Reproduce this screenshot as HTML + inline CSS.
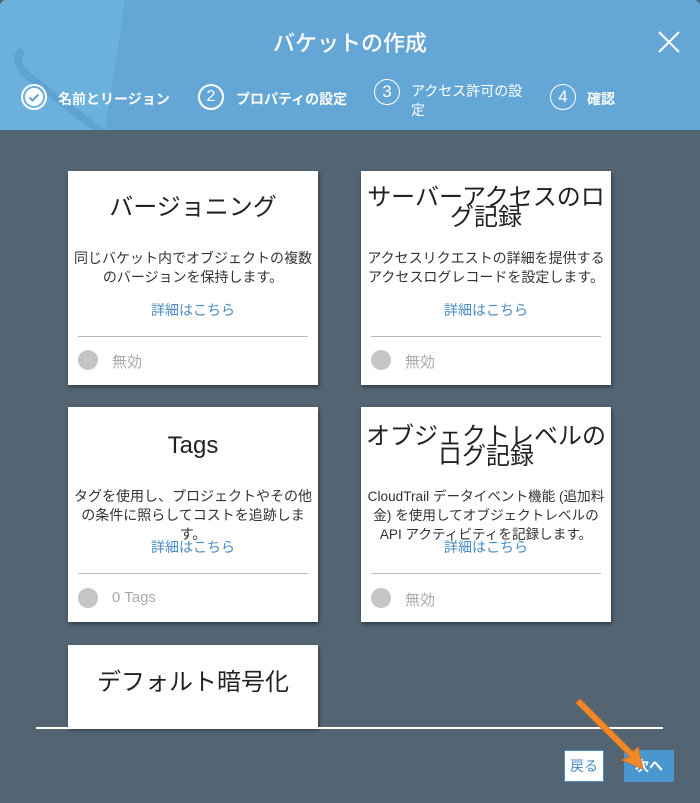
<!DOCTYPE html>
<html><head><meta charset="utf-8">
<style>
*{margin:0;padding:0;box-sizing:border-box}
body{width:700px;height:803px;overflow:hidden;background:#536573;font-family:"Liberation Sans","Noto Sans CJK JP",sans-serif;position:relative}
.hdr{position:absolute;left:0;top:0;width:700px;height:130px;background:#64a7d6;overflow:hidden;border-radius:6px 6px 0 0}
.t{position:absolute;white-space:nowrap}
.card{position:absolute;width:250px;background:#fff;box-shadow:1px 2px 4px rgba(0,0,0,.45);overflow:hidden}
.ttl{position:absolute;left:0;width:100%;text-align:center;font-size:24px;line-height:20px;color:#222}
.desc{position:absolute;left:5px;right:5px;text-align:center;font-size:14px;line-height:19px;color:#333}
.lnk{position:absolute;left:0;width:100%;text-align:center;font-size:14px;color:#4a8cc7}
.ln{position:absolute;left:10px;right:10px;height:1px;background:#bbb}
.dot{position:absolute;left:10px;width:20px;height:20px;border-radius:50%;background:#c3c5c6}
.lab{position:absolute;left:44px;font-size:15px;color:#aaa}
.step{position:absolute;width:26px;height:26px;border:2px solid #fff;border-radius:50%;color:#fff;font-size:16px;text-align:center;line-height:22px}
.sl{position:absolute;color:#fff;font-size:14px;font-weight:bold}
</style></head><body>
<div class="hdr">
 <svg width="700" height="130" style="position:absolute;left:0;top:0">
  <path d="M0 0 L125 0 L105 130 L0 130 Z" fill="#6ab1de"/>
  <path d="M22 50 Q12 62 28 76 L112 140" stroke="#5fa3d3" stroke-width="8" fill="none"/>
 </svg>
 <div class="t" style="left:0;width:700px;text-align:center;top:26px;font-size:22px;color:#fff;font-weight:500">バケットの作成</div>
 <svg width="24" height="24" style="position:absolute;left:657px;top:30px"><path d="M2 2L22 22M22 2L2 22" stroke="#fff" stroke-width="2"/></svg>
 <div class="step" style="left:21px;top:84px"><svg width="22" height="22" style="position:absolute;left:0;top:0"><circle cx="11" cy="11" r="9" fill="#fff"/><path d="M6.5 11.5l3 3 6-6" stroke="#64a7d6" stroke-width="2.2" fill="none"/></svg></div>
 <div class="sl" style="left:58px;top:89px">名前とリージョン</div>
 <div class="step" style="left:198px;top:84px">2</div>
 <div class="sl" style="left:236px;top:89px">プロパティの設定</div>
 <div class="step" style="left:374px;top:79px;border-width:1px;font-size:17px;line-height:24px">3</div>
 <div class="sl" style="left:411px;top:82px;font-weight:normal;line-height:19px">アクセス許可の設<br>定</div>
 <div class="step" style="left:550px;top:84px;border-width:1px;font-size:17px;line-height:24px">4</div>
 <div class="sl" style="left:587px;top:89px">確認</div>
</div>

<div class="card" style="left:68px;top:171px;height:214px">
 <div class="ttl" style="top:27px">バージョニング</div>
 <div class="desc" style="top:78px">同じバケット内でオブジェクトの複数のバージョンを保持します。</div>
 <div class="lnk" style="top:129px">詳細はこちら</div>
 <div class="ln" style="top:165px"></div>
 <div class="dot" style="top:179px"></div><div class="lab" style="top:180px">無効</div>
</div>
<div class="card" style="left:361px;top:171px;height:214px">
 <div class="ttl" style="top:17px">サーバーアクセスのロ<br>グ記録</div>
 <div class="desc" style="top:78px">アクセスリクエストの詳細を提供するアクセスログレコードを設定します。</div>
 <div class="lnk" style="top:129px">詳細はこちら</div>
 <div class="ln" style="top:165px"></div>
 <div class="dot" style="top:179px"></div><div class="lab" style="top:180px">無効</div>
</div>
<div class="card" style="left:68px;top:407px;height:215px">
 <div class="ttl" style="top:29px">Tags</div>
 <div class="desc" style="top:80px">タグを使用し、プロジェクトやその他の条件に照らしてコストを追跡します。</div>
 <div class="lnk" style="top:130px">詳細はこちら</div>
 <div class="ln" style="top:166px"></div>
 <div class="dot" style="top:181px"></div><div class="lab" style="top:182px">0 Tags</div>
</div>
<div class="card" style="left:361px;top:407px;height:215px">
 <div class="ttl" style="top:20px">オブジェクトレベルの<br>ログ記録</div>
 <div class="desc" style="top:80px;left:1px;right:1px;font-size:13.6px">CloudTrail データイベント機能 (追加料金) を使用してオブジェクトレベルの<br>API アクティビティを記録します。</div>
 <div class="lnk" style="top:130px">詳細はこちら</div>
 <div class="ln" style="top:166px"></div>
 <div class="dot" style="top:181px"></div><div class="lab" style="top:182px">無効</div>
</div>
<div class="card" style="left:68px;top:645px;height:83px">
 <div class="ttl" style="top:28px">デフォルト暗号化</div>
</div>
<div style="position:absolute;left:36px;top:727px;width:627px;height:2px;background:#fff"></div>
<div style="position:absolute;left:564px;top:750px;width:40px;height:32px;background:#fff;border:1px solid #4a90c8;color:#4a8cc7;font-size:14px;text-align:center;line-height:30px">戻る</div>
<div style="position:absolute;left:624px;top:750px;width:50px;height:32px;background:#4a96d0;color:#fff;font-size:14px;font-weight:bold;text-align:center;line-height:32px">次へ</div>
<svg width="700" height="803" style="position:absolute;left:0;top:0">
 <path d="M576 703 L630 757 L622 760 L643 769 L638 747 L633 752 L580 699 Z" fill="#ef8a2b" stroke="#d9731c" stroke-width="1"/>
</svg>
</body></html>
